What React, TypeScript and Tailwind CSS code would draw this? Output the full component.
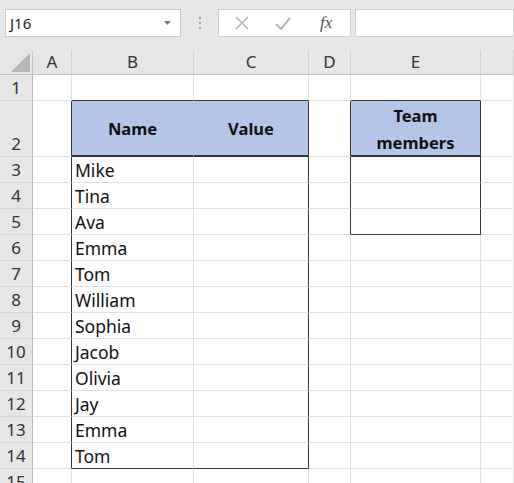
import React from "react";

const cols = ["A", "B", "C", "D", "E", ""];
const names = ["Mike", "Tina", "Ava", "Emma", "Tom", "William", "Sophia", "Jacob", "Olivia", "Jay", "Emma", "Tom"];
const rows = Array.from({ length: 15 }, (_, i) => i + 1);

const font = { fontFamily: "'Noto Sans', 'Liberation Sans', sans-serif" };

function rightClass(r: number, c: number) {
  // c: 0=A,1=B,2=C,3=D,4=E,5=F
  if (c === 0 && r >= 2 && r <= 14) return "border-r-[#3a3a3a]";
  if (c === 2 && r >= 2 && r <= 14) return "border-r-[#3a3a3a]";
  if (c === 3 && r >= 2 && r <= 5) return "border-r-[#3a3a3a]";
  if (c === 4 && r >= 2 && r <= 5) return "border-r-[#3a3a3a]";
  if (c === 1 && r === 2) return "border-r-[#b4c6e7]";
  return "border-r-[#e1e1e1]";
}

function bottomClass(r: number, c: number) {
  if (r === 1 && (c === 1 || c === 2 || c === 4)) return "border-b border-b-[#3a3a3a]";
  if (r === 2 && (c === 1 || c === 2 || c === 4)) return "border-b-2 border-b-[#2f3a4f]";
  if (r === 14 && (c === 1 || c === 2)) return "border-b border-b-[#3a3a3a]";
  if (r === 5 && c === 4) return "border-b border-b-[#3a3a3a]";
  return "border-b border-b-[#e1e1e1]";
}

function Cell({ r, c }: { r: number; c: number }) {
  const fill = r === 2 && (c === 1 || c === 2 || c === 4) ? "bg-[#b4c6e7]" : "bg-white";
  let content: React.ReactNode = null;
  if (r === 2 && c === 1) content = <span className="font-bold">Name</span>;
  if (r === 2 && c === 2) content = <span className="font-bold">Value</span>;
  if (r === 2 && c === 4)
    content = (
      <span className="font-bold leading-[27px] text-center">
        Team
        <br />
        members
      </span>
    );
  const isName = c === 1 && r >= 3 && r <= 14;
  return (
    <div
      className={`border-r ${rightClass(r, c)} ${bottomClass(r, c)} ${fill} flex leading-[22px] text-[#111] ${
        r === 2 ? "items-center justify-center pt-[2px] text-[16.5px]" : "items-end pl-[3px] pb-[1px] text-[17.5px]"
      }`}
    >
      {isName ? names[r - 3] : content}
    </div>
  );
}

export default function App() {
  return (
    <div className="w-[514px] h-[483px] overflow-hidden bg-white" style={font}>
      {/* formula bar */}
      <div className="h-[50px] bg-[#e6e6e6] flex items-start pt-[9px] pl-[5px] gap-0">
        <div className="w-[176px] h-[28px] bg-white border border-[#c8c8c8] flex items-center justify-between pl-[4px] pr-[9px]">
          <span className="text-[15px] text-[#222]">J16</span>
          <svg width="7" height="4" viewBox="0 0 7 4">
            <path d="M0 0 L7 0 L3.5 4 Z" fill="#7a7a7a" />
          </svg>
        </div>
        <div className="w-[37px] h-[28px] flex flex-col items-center justify-center gap-[3px]">
          <span className="w-[2px] h-[2px] bg-[#a0a0a0]" />
          <span className="w-[2px] h-[2px] bg-[#a0a0a0]" />
          <span className="w-[2px] h-[2px] bg-[#a0a0a0]" />
        </div>
        <div className="w-[133px] h-[28px] bg-white border border-[#d0d0d0] flex items-center">
          <div className="w-[44px] flex justify-center pl-[2px]">
            <svg width="14" height="14" viewBox="0 0 14 14">
              <path d="M1 1 L13 13 M13 1 L1 13" stroke="#b4b4b4" strokeWidth="1.6" />
            </svg>
          </div>
          <div className="w-[40px] flex justify-center">
            <svg width="16" height="13" viewBox="0 0 16 13">
              <path d="M1 7 L6 12 L15 1" stroke="#b4b4b4" strokeWidth="2" fill="none" />
            </svg>
          </div>
          <div className="w-[48px] flex justify-center">
            <span
              className="italic text-[17px] text-[#555]"
              style={{ fontFamily: "'Liberation Serif', serif" }}
            >
              fx
            </span>
          </div>
        </div>
        <div className="ml-[4px] flex-1 h-[28px] bg-white border border-[#d0d0d0]" />
      </div>

      {/* sheet */}
      <div className="grid grid-cols-[33px_39px_122px_115px_42px_130px_33px] grid-rows-[25px_26px_56px_repeat(13,26px)]">
        {/* corner */}
        <div className="bg-[#e6e6e6] border-r border-r-[#c6c6c6] border-b border-b-[#bdbdbd] flex items-end justify-end pr-[2px] pb-[2px]">
          <svg width="19" height="19" viewBox="0 0 19 19">
            <path d="M19 0 L19 19 L0 19 Z" fill="#b5b5b5" />
          </svg>
        </div>
        {cols.map((l, i) => (
          <div
            key={l + i}
            className="bg-[#e6e6e6] border-r border-r-[#cfcfcf] border-b border-b-[#bdbdbd] flex items-center justify-center text-[17px] text-[#333]"
          >
            {l}
          </div>
        ))}
        {rows.map((r) => (
          <React.Fragment key={r}>
            <div className="bg-[#e6e6e6] border-r border-r-[#bdbdbd] border-b border-b-[#d4d4d4] flex items-end justify-center pb-[1px] text-[17px] leading-[22px] text-[#333]">
              {r}
            </div>
            {cols.map((_, c) => (
              <Cell key={c} r={r} c={c} />
            ))}
          </React.Fragment>
        ))}
      </div>
    </div>
  );
}
